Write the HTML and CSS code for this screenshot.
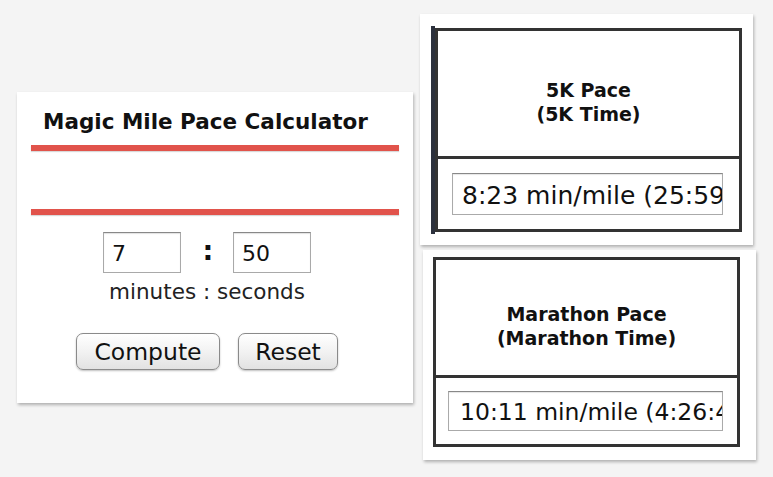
FILE: index.html
```html
<!DOCTYPE html>
<html>
<head>
<meta charset="utf-8">
<link rel="stylesheet" href="styles.css">
</head>
<body>
<div class="page">
  <div class="calc card">
    <h1 class="title">Magic Mile Pace Calculator</h1>
    <div class="rule"></div>
    <div class="rule-gap"></div>
    <div class="rule"></div>
    <div class="form">
      <div class="time-row">
        <input class="time-input" type="text" value="7">
        <span class="colon">:</span>
        <input class="time-input" type="text" value="50">
      </div>
      <div class="units">minutes : seconds</div>
      <div class="buttons">
        <button class="btn btn-compute" type="button">Compute</button>
        <button class="btn btn-reset" type="button">Reset</button>
      </div>
    </div>
  </div>
  <div class="results">
    <div class="card result result-5k">
      <div class="result-table">
        <div class="result-head">5K Pace<br>(5K Time)</div>
        <div class="result-body">
          <input class="result-input" type="text" value="8:23 min/mile (25:59)" readonly>
        </div>
      </div>
    </div>
    <div class="card result result-mar">
      <div class="result-table">
        <div class="result-head">Marathon Pace<br>(Marathon Time)</div>
        <div class="result-body">
          <input class="result-input" type="text" value="10:11 min/mile (4:26:48)" readonly>
        </div>
      </div>
    </div>
  </div>
</div>
</body>
</html>
```
FILE: styles.css
```css
html, body {
  margin: 0;
  padding: 0;
  background: #f4f4f4;
  width: 773px;
  height: 477px;
  overflow: hidden;
  font-family: "DejaVu Sans", Verdana, sans-serif;
  color: #111;
}

.page {
  display: flex;
  align-items: flex-start;
  padding-left: 17px;
}

.card {
  background: #fff;
  box-shadow: 1px 2px 3px rgba(0, 0, 0, 0.28);
}

/* ---------- calculator card ---------- */
.calc {
  margin-top: 92px;
  width: 396px;
  height: 311px;
  box-sizing: border-box;
  padding: 18px 14px 0 14px;
}

.title {
  margin: 0 0 11px 12px;
  font-size: 21.5px;
  font-weight: bold;
  line-height: 24px;
  color: #111;
  white-space: nowrap;
}

.rule {
  height: 6px;
  background: #e1534b;
  box-shadow: 0 1px 1px rgba(0, 0, 0, 0.15);
}

.rule-gap {
  height: 58px;
}

.form {
  display: flex;
  flex-direction: column;
  align-items: center;
  padding-right: 16px;
  padding-top: 17px;
}

.time-row {
  display: flex;
  align-items: center;
  gap: 17px;
}

.time-input {
  width: 78px;
  height: 41px;
  box-sizing: border-box;
  border: 1px solid #a9a9a9;
  border-top-color: #888;
  padding: 2px 8px 0;
  font-family: "DejaVu Sans", Verdana, sans-serif;
  font-size: 22px;
  color: #111;
  background: #fff;
  outline: none;
  box-shadow: inset 0 1px 1px rgba(0, 0, 0, 0.12);
}

.colon {
  font-size: 27px;
  font-weight: bold;
  width: 16px;
  text-align: center;
  line-height: 30px;
  margin-top: -4px;
  margin-left: 2px;
}

.units {
  margin-top: 6px;
  font-size: 21.5px;
  line-height: 26px;
  color: #222;
}

.buttons {
  display: flex;
  gap: 18px;
  margin-top: 28px;
}

.btn {
  height: 37px;
  box-sizing: border-box;
  border: 1px solid #8a8a8a;
  border-radius: 7px;
  background: linear-gradient(#ffffff, #f2f2f2 50%, #e2e2e2);
  box-shadow: 0 1px 2px rgba(0, 0, 0, 0.25);
  font-family: "DejaVu Sans", Verdana, sans-serif;
  font-size: 23.5px;
  color: #111;
  padding: 0;
}

.btn-compute { width: 144px; }
.btn-reset { width: 100px; }

/* ---------- result cards ---------- */
.results {
  display: flex;
  flex-direction: column;
  gap: 5px;
  margin-left: 7px;
  margin-top: 14px;
}

.result {
  width: 333px;
  box-sizing: border-box;
}

.result-5k {
  height: 231px;
  padding: 14px 0 0 15px;
  position: relative;
}

.result-5k::before {
  content: "";
  position: absolute;
  left: 11px;
  top: 12px;
  width: 4px;
  height: 208px;
  background: #2c313d;
}

.result-mar {
  margin-left: 3px;
  height: 210px;
  padding: 7px 0 0 10px;
}

.result-table {
  width: 307px;
  box-sizing: border-box;
  border: 3px solid #333;
  display: flex;
  flex-direction: column;
}

.result-5k .result-table { height: 204px; }
.result-mar .result-table { height: 190px; }

.result-head {
  flex: 1;
  display: flex;
  align-items: center;
  justify-content: center;
  text-align: center;
  padding-top: 16px;
  font-size: 19px;
  font-weight: bold;
  line-height: 24px;
  border-bottom: 3px solid #333;
}

.result-body {
  height: 70px;
  box-sizing: border-box;
  padding: 14px 16px 0 14px;
}

.result-mar .result-body {
  height: 66px;
  padding: 13px 14px 0 12px;
}

.result-input {
  display: block;
  width: 100%;
  height: 42px;
  box-sizing: border-box;
  border: 1px solid #aaa;
  border-top-color: #888;
  padding: 2px 0 0 9px;
  font-family: "DejaVu Sans", Verdana, sans-serif;
  font-size: 25px;
  color: #111;
  background: #fff;
  outline: none;
  box-shadow: inset 0 1px 1px rgba(0, 0, 0, 0.1);
}

.result-mar .result-input {
  height: 40px;
  font-size: 23.5px;
  padding-left: 11px;
}
```
